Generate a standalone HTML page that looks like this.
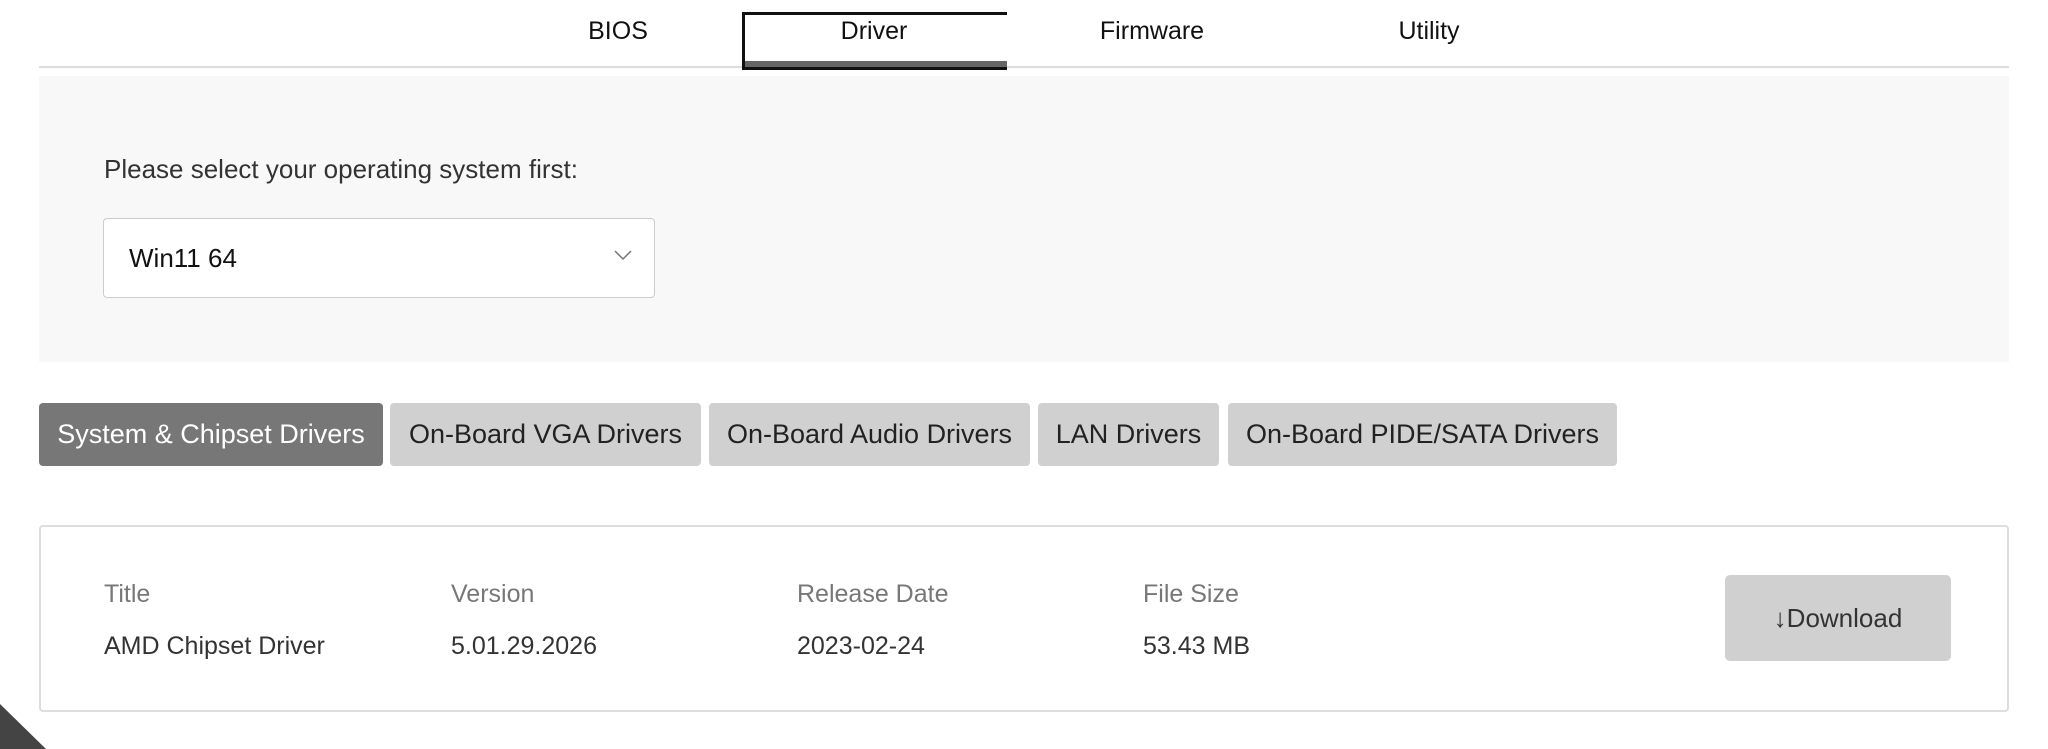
<!DOCTYPE html>
<html><head><style>
body{margin:0;width:2048px;height:749px;background:#fff;position:relative;overflow:hidden;font-family:"Liberation Sans",sans-serif;}
.abs{position:absolute}
.tab{position:absolute;top:17px;font-size:25px;color:#111;transform:translateX(-50%)}
.btn{position:absolute;top:403px;height:63px;background:#d0d0d0;border-radius:4px;font-size:27px;color:#222;line-height:63px;text-align:center}
.h{position:absolute;top:580px;font-size:25px;color:#777}
.v{position:absolute;top:632px;font-size:25px;color:#333}
</style></head><body>
<div class="abs" style="left:39px;top:66px;width:1970px;height:2px;background:#ddd"></div>
<div class="abs" style="left:742px;top:12px;width:262px;height:52px;border-top:3px solid #111;border-left:3px solid #111;border-bottom:3px solid #111;box-shadow:inset 0 -6px 0 #666"></div>
<div class="tab" style="left:618px">BIOS</div>
<div class="tab" style="left:874px">Driver</div>
<div class="tab" style="left:1152px">Firmware</div>
<div class="tab" style="left:1429px">Utility</div>
<div class="abs" style="left:39px;top:76px;width:1970px;height:286px;background:#f8f8f8"></div>
<div class="abs" style="left:104px;top:154px;font-size:26px;color:#333">Please select your operating system first:</div>
<div class="abs" style="left:103px;top:218px;width:550px;height:78px;background:#fff;border:1px solid #ccc;border-radius:4px"></div>
<div class="abs" style="left:129px;top:243px;font-size:26px;color:#111">Win11 64</div>
<svg class="abs" style="left:613px;top:248px" width="20" height="14"><path d="M2 3 L10 11 L18 3" stroke="#777" stroke-width="1.5" fill="none"/></svg>
<div class="btn" style="left:39px;width:344px;background:#777;color:#fff">System &amp; Chipset Drivers</div>
<div class="btn" style="left:390px;width:311px">On-Board VGA Drivers</div>
<div class="btn" style="left:709px;width:321px">On-Board Audio Drivers</div>
<div class="btn" style="left:1038px;width:181px">LAN Drivers</div>
<div class="btn" style="left:1228px;width:389px">On-Board PIDE/SATA Drivers</div>
<div class="abs" style="left:39px;top:525px;width:1966px;height:183px;border:2px solid #ddd;border-radius:4px"></div>
<div class="h" style="left:104px">Title</div><div class="v" style="left:104px">AMD Chipset Driver</div>
<div class="h" style="left:451px">Version</div><div class="v" style="left:451px">5.01.29.2026</div>
<div class="h" style="left:797px">Release Date</div><div class="v" style="left:797px">2023-02-24</div>
<div class="h" style="left:1143px">File Size</div><div class="v" style="left:1143px">53.43 MB</div>
<div class="abs" style="left:1725px;top:575px;width:226px;height:86px;background:#d0d0d0;border-radius:5px;font-size:26px;color:#333;line-height:86px;text-align:center">↓Download</div>
<svg class="abs" style="left:0;top:700px" width="50" height="49"><path d="M0 4 L46 49 L0 49Z" fill="#444"/></svg>
</body></html>
